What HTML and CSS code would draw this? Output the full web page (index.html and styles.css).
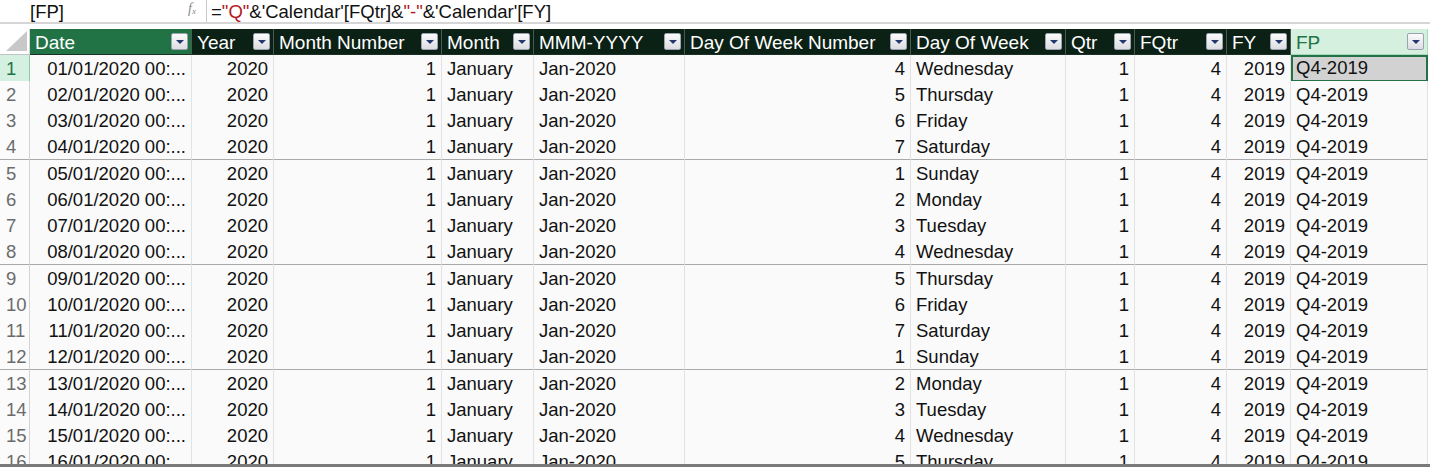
FILE: index.html
```html
<!DOCTYPE html>
<html>
<head>
<meta charset="utf-8">
<link rel="stylesheet" href="styles.css">
</head>
<body>
<div class="app">
  <div class="fbar">
    <div class="namebox">[FP]</div>
    <div class="fx">f<sub>x</sub></div>
    <div class="formula">=<span class="str">"Q"</span>&amp;'Calendar'[FQtr]&amp;<span class="str">"-"</span>&amp;'Calendar'[FY]</div>
  </div>
  <div class="sheet">
    <div class="row head">
      <div class="rh corner"><svg width="24" height="22" viewBox="0 0 24 22"><polygon points="23,1 23,21 2,21" fill="#c8c8c8"/></svg></div>
      <div class="hc first"><span>Date</span><i class="dd"></i></div>
      <div class="hc"><span>Year</span><i class="dd"></i></div>
      <div class="hc"><span>Month Number</span><i class="dd"></i></div>
      <div class="hc"><span>Month</span><i class="dd"></i></div>
      <div class="hc"><span>MMM-YYYY</span><i class="dd"></i></div>
      <div class="hc"><span>Day Of Week Number</span><i class="dd"></i></div>
      <div class="hc"><span>Day Of Week</span><i class="dd"></i></div>
      <div class="hc"><span>Qtr</span><i class="dd"></i></div>
      <div class="hc"><span>FQtr</span><i class="dd"></i></div>
      <div class="hc"><span>FY</span><i class="dd"></i></div>
      <div class="hc sel"><span>FP</span><i class="dd"></i></div>
    </div>
    <div class="row"><div class="rh on">1</div><div class="c r">01/01/2020 00:...</div><div class="c r">2020</div><div class="c r">1</div><div class="c">January</div><div class="c">Jan-2020</div><div class="c r">4</div><div class="c">Wednesday</div><div class="c r">1</div><div class="c r">4</div><div class="c r">2019</div><div class="c active">Q4-2019</div></div>
    <div class="row"><div class="rh">2</div><div class="c r">02/01/2020 00:...</div><div class="c r">2020</div><div class="c r">1</div><div class="c">January</div><div class="c">Jan-2020</div><div class="c r">5</div><div class="c">Thursday</div><div class="c r">1</div><div class="c r">4</div><div class="c r">2019</div><div class="c">Q4-2019</div></div>
    <div class="row"><div class="rh">3</div><div class="c r">03/01/2020 00:...</div><div class="c r">2020</div><div class="c r">1</div><div class="c">January</div><div class="c">Jan-2020</div><div class="c r">6</div><div class="c">Friday</div><div class="c r">1</div><div class="c r">4</div><div class="c r">2019</div><div class="c">Q4-2019</div></div>
    <div class="row grp"><div class="rh">4</div><div class="c r">04/01/2020 00:...</div><div class="c r">2020</div><div class="c r">1</div><div class="c">January</div><div class="c">Jan-2020</div><div class="c r">7</div><div class="c">Saturday</div><div class="c r">1</div><div class="c r">4</div><div class="c r">2019</div><div class="c">Q4-2019</div></div>
    <div class="row"><div class="rh">5</div><div class="c r">05/01/2020 00:...</div><div class="c r">2020</div><div class="c r">1</div><div class="c">January</div><div class="c">Jan-2020</div><div class="c r">1</div><div class="c">Sunday</div><div class="c r">1</div><div class="c r">4</div><div class="c r">2019</div><div class="c">Q4-2019</div></div>
    <div class="row"><div class="rh">6</div><div class="c r">06/01/2020 00:...</div><div class="c r">2020</div><div class="c r">1</div><div class="c">January</div><div class="c">Jan-2020</div><div class="c r">2</div><div class="c">Monday</div><div class="c r">1</div><div class="c r">4</div><div class="c r">2019</div><div class="c">Q4-2019</div></div>
    <div class="row"><div class="rh">7</div><div class="c r">07/01/2020 00:...</div><div class="c r">2020</div><div class="c r">1</div><div class="c">January</div><div class="c">Jan-2020</div><div class="c r">3</div><div class="c">Tuesday</div><div class="c r">1</div><div class="c r">4</div><div class="c r">2019</div><div class="c">Q4-2019</div></div>
    <div class="row grp"><div class="rh">8</div><div class="c r">08/01/2020 00:...</div><div class="c r">2020</div><div class="c r">1</div><div class="c">January</div><div class="c">Jan-2020</div><div class="c r">4</div><div class="c">Wednesday</div><div class="c r">1</div><div class="c r">4</div><div class="c r">2019</div><div class="c">Q4-2019</div></div>
    <div class="row"><div class="rh">9</div><div class="c r">09/01/2020 00:...</div><div class="c r">2020</div><div class="c r">1</div><div class="c">January</div><div class="c">Jan-2020</div><div class="c r">5</div><div class="c">Thursday</div><div class="c r">1</div><div class="c r">4</div><div class="c r">2019</div><div class="c">Q4-2019</div></div>
    <div class="row"><div class="rh">10</div><div class="c r">10/01/2020 00:...</div><div class="c r">2020</div><div class="c r">1</div><div class="c">January</div><div class="c">Jan-2020</div><div class="c r">6</div><div class="c">Friday</div><div class="c r">1</div><div class="c r">4</div><div class="c r">2019</div><div class="c">Q4-2019</div></div>
    <div class="row"><div class="rh">11</div><div class="c r">11/01/2020 00:...</div><div class="c r">2020</div><div class="c r">1</div><div class="c">January</div><div class="c">Jan-2020</div><div class="c r">7</div><div class="c">Saturday</div><div class="c r">1</div><div class="c r">4</div><div class="c r">2019</div><div class="c">Q4-2019</div></div>
    <div class="row grp"><div class="rh">12</div><div class="c r">12/01/2020 00:...</div><div class="c r">2020</div><div class="c r">1</div><div class="c">January</div><div class="c">Jan-2020</div><div class="c r">1</div><div class="c">Sunday</div><div class="c r">1</div><div class="c r">4</div><div class="c r">2019</div><div class="c">Q4-2019</div></div>
    <div class="row"><div class="rh">13</div><div class="c r">13/01/2020 00:...</div><div class="c r">2020</div><div class="c r">1</div><div class="c">January</div><div class="c">Jan-2020</div><div class="c r">2</div><div class="c">Monday</div><div class="c r">1</div><div class="c r">4</div><div class="c r">2019</div><div class="c">Q4-2019</div></div>
    <div class="row"><div class="rh">14</div><div class="c r">14/01/2020 00:...</div><div class="c r">2020</div><div class="c r">1</div><div class="c">January</div><div class="c">Jan-2020</div><div class="c r">3</div><div class="c">Tuesday</div><div class="c r">1</div><div class="c r">4</div><div class="c r">2019</div><div class="c">Q4-2019</div></div>
    <div class="row"><div class="rh">15</div><div class="c r">15/01/2020 00:...</div><div class="c r">2020</div><div class="c r">1</div><div class="c">January</div><div class="c">Jan-2020</div><div class="c r">4</div><div class="c">Wednesday</div><div class="c r">1</div><div class="c r">4</div><div class="c r">2019</div><div class="c">Q4-2019</div></div>
    <div class="row grp"><div class="rh">16</div><div class="c r">16/01/2020 00:...</div><div class="c r">2020</div><div class="c r">1</div><div class="c">January</div><div class="c">Jan-2020</div><div class="c r">5</div><div class="c">Thursday</div><div class="c r">1</div><div class="c r">4</div><div class="c r">2019</div><div class="c">Q4-2019</div></div>
  </div>
  <div class="edge"></div>
</div>
</body>
</html>
```

FILE: styles.css
```css
* { box-sizing: border-box; }
html, body { margin: 0; padding: 0; }
body {
  background: #ffffff;
  font-family: "Liberation Sans", Arial, sans-serif;
  color: #111;
  overflow: hidden;
}
.app {
  width: 1430px;
  height: 467px;
  display: flex;
  flex-direction: column;
  overflow: hidden;
}
.fbar {
  height: 24px;
  flex: 0 0 24px;
  display: flex;
  align-items: center;
  border-bottom: 2px solid #d6d6d6;
  font-size: 18.5px;
  line-height: 22px;
}
.namebox {
  width: 188px;
  padding-left: 30px;
  padding-top: 1px;
}
.fx {
  width: 19px;
  height: 22px;
  font-family: "Liberation Serif", serif;
  font-style: italic;
  font-size: 14px;
  color: #8a8a8a;
  border-right: 1px solid #c8c8c8;
  line-height: 17px;
}
.fx sub { font-size: 9px; vertical-align: -1px; }
.formula {
  padding-left: 4px;
  padding-top: 1px;
  white-space: nowrap;
}
.str { color: #b3191c; }

.sheet {
  flex: 1 1 auto;
  overflow: hidden;
  padding-top: 5px;
}
.row {
  display: grid;
  grid-template-columns: 30px 162px 82px 168px 92px 151px 226px 155px 69px 92px 64px 137px;
  height: 26px;
  font-size: 18.5px;
  line-height: 25px;
}
.row.grp { height: 27px; }
.row.head { height: 26px; font-size: 19px; }

.rh {
  color: #6b6b6b;
  padding: 1px 0 0 6px;
  background: #fbfbfb;
  border-right: 1px solid #d4d4d4;
  border-bottom: 1px solid #e2e2e2;
  white-space: nowrap;
}
.rh.on {
  background: #d3f0e0;
  color: #217346;
  border-right: 1px solid #8fc9a8;
}
.rh.corner {
  padding: 1px 0 0 4px;
  background: #fff;
  border-bottom: 1px solid #c4c4c4;
  line-height: 0;
}
.grp .rh, .grp .c { border-bottom: 2px solid #a9a9a9; }

.c {
  background: #fafafa;
  border-right: 1px solid #e2e2e2;
  border-bottom: 1px solid #e2e2e2;
  padding: 1px 5px 0 5px;
  white-space: nowrap;
  overflow: hidden;
}
.c.r { text-align: right; }
.c.active {
  background: #d2d2d2;
  border: 2px solid #217346;
  padding: 0 3px 0 3px;
  line-height: 22px;
}

.hc {
  display: flex;
  align-items: center;
  background: #0c2116;
  color: #ffffff;
  border-right: 1px solid #4a5a50;
  border-bottom: 1px solid #1b3024;
  padding: 0 3px 0 5px;
  white-space: nowrap;
  overflow: hidden;
}
.hc.first { background: #217346; }
.hc.sel {
  background: #d5f0df;
  color: #217346;
  border-right: 1px solid #a8d8ba;
  border-bottom: 1px solid #a8d8ba;
}
.hc span { flex: 1 1 auto; padding-top: 1px; }
.dd {
  flex: 0 0 17px;
  width: 17px;
  height: 17px;
  border: 1px solid #9aa3b0;
  border-radius: 2px;
  background: linear-gradient(#fbfbfb, #dcdde2);
  position: relative;
}
.dd::after {
  content: "";
  position: absolute;
  left: 4px;
  top: 6px;
  border-left: 4px solid transparent;
  border-right: 4px solid transparent;
  border-top: 4px solid #24366e;
}
.edge {
  flex: 0 0 3px;
  background: #7a7a7a;
}
```
